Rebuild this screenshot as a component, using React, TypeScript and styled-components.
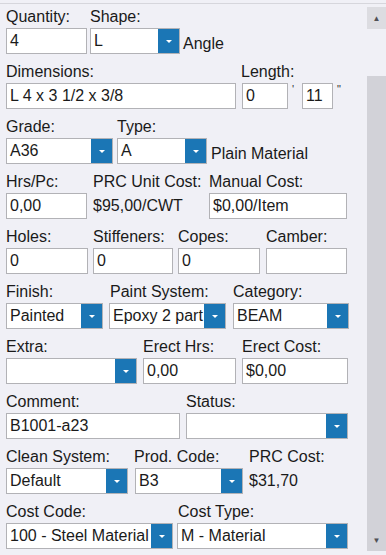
import React from "react";
import styled, { createGlobalStyle } from "styled-components";

const GlobalStyle = createGlobalStyle`
  html, body {
    margin: 0;
    padding: 0;
    background: #f0f0f6;
    overflow: hidden;
  }
  * {
    box-sizing: border-box;
  }
`;

const Window = styled.div`
  width: 386px;
  height: 555px;
  background: #f0f0f6;
  font-family: "Liberation Sans", Arial, sans-serif;
  font-size: 16px;
  color: #1a1a1a;
  display: flex;
  flex-direction: column;
  overflow: hidden;
`;

const TopLine = styled.div`
  height: 1px;
  margin-top: 3px;
  background: #d6d6dc;
  flex: none;
`;

const Body = styled.div`
  display: flex;
  flex: 1;
  padding-top: 3px;
`;

const Form = styled.div`
  flex: 1;
  display: flex;
  flex-direction: column;
  gap: 9px;
  padding: 1px 0 0 6px;
`;

const Row = styled.div<{ $gap?: number }>`
  display: flex;
  gap: ${(p) => p.$gap ?? 5}px;
`;

const Field = styled.div<{ $w?: number; $shift?: number }>`
  display: flex;
  flex-direction: column;
  width: ${(p) => (p.$w ? `${p.$w}px` : "auto")};
  flex: none;
  margin-left: ${(p) => p.$shift ?? 0}px;
`;

const Label = styled.div<{ $indent?: number }>`
  height: 20px;
  line-height: 18px;
  white-space: nowrap;
  margin-left: ${(p) => p.$indent ?? 0}px;
`;

const TextBox = styled.div`
  height: 26px;
  border: 1px solid #b2b2b6;
  background: #fff;
  padding-left: 3px;
  line-height: 24px;
  white-space: nowrap;
  overflow: hidden;
`;

const Combo = styled.div`
  height: 26px;
  border: 1px solid #b2b2b6;
  background: #fff;
  display: flex;
  overflow: hidden;
`;

const ComboText = styled.div`
  flex: 1;
  min-width: 0;
  padding-left: 3px;
  line-height: 24px;
  white-space: nowrap;
  overflow: visible;
`;

const DropButton = styled.div`
  width: 21px;
  flex: none;
  position: relative;
  z-index: 1;
  background: #1b76b5;
  display: flex;
  align-items: center;
  justify-content: center;
  &::after {
    content: "";
    border-left: 3px solid transparent;
    border-right: 3px solid transparent;
    border-top: 3px solid #ffffff;
    margin-top: 1px;
  }
`;

const Note = styled.div<{ $center?: boolean }>`
  height: 26px;
  display: flex;
  align-items: ${(p) => (p.$center ? "center" : "flex-end")};
  padding-bottom: ${(p) => (p.$center ? 0 : 1)}px;
  white-space: nowrap;
`;

const Mark = styled.div<{ $w: number }>`
  height: 26px;
  width: ${(p) => p.$w}px;
  font-size: 11px;
  line-height: 12px;
  padding-left: 4px;
  color: #333;
`;

const Scrollbar = styled.div`
  width: 19px;
  flex: none;
  display: flex;
  flex-direction: column;
  padding-bottom: 4px;
`;

const ScrollButton = styled.div`
  height: 22px;
  background: #dcdce1;
  display: flex;
  align-items: center;
  justify-content: center;
  font-size: 8px;
  color: #505055;
`;

const Thumb = styled.div`
  flex: 1;
  margin-top: 47px;
  background: #d2d2d8;
  display: flex;
  flex-direction: column;
  justify-content: flex-end;
  align-items: center;
  padding-bottom: 6px;
  font-size: 8px;
  color: #505055;
`;

const Select: React.FC<{ value: string }> = ({ value }) => (
  <Combo>
    <ComboText>{value}</ComboText>
    <DropButton />
  </Combo>
);

const App: React.FC = () => {
  return (
    <Window>
      <GlobalStyle />
      <TopLine />
      <Body>
        <Form>
          <Row $gap={3}>
            <Field $w={81}>
              <Label>Quantity:</Label>
              <TextBox>4</TextBox>
            </Field>
            <Field $w={90}>
              <Label>Shape:</Label>
              <Select value="L" />
            </Field>
            <Field>
              <Label />
              <Note>Angle</Note>
            </Field>
          </Row>

          <Row $gap={6}>
            <Field $w={230}>
              <Label>Dimensions:</Label>
              <TextBox>L 4 x 3 1/2 x 3/8</TextBox>
            </Field>
            <Row $gap={0}>
              <Field $w={46}>
                <Label $indent={-1}>Length:</Label>
                <TextBox>0</TextBox>
              </Field>
              <Field>
                <Label />
                <Mark $w={14}>'</Mark>
              </Field>
              <Field $w={31}>
                <Label />
                <TextBox>11</TextBox>
              </Field>
              <Field>
                <Label />
                <Mark $w={14}>"</Mark>
              </Field>
            </Row>
          </Row>

          <Row $gap={4}>
            <Field $w={107}>
              <Label>Grade:</Label>
              <Select value="A36" />
            </Field>
            <Field $w={90}>
              <Label>Type:</Label>
              <Select value="A" />
            </Field>
            <Field>
              <Label />
              <Note>Plain Material</Note>
            </Field>
          </Row>

          <Row $gap={6}>
            <Field $w={81}>
              <Label>Hrs/Pc:</Label>
              <TextBox>0,00</TextBox>
            </Field>
            <Field $w={110}>
              <Label>PRC Unit Cost:</Label>
              <Note $center>$95,00/CWT</Note>
            </Field>
            <Field $w={138}>
              <Label>Manual Cost:</Label>
              <TextBox>$0,00/Item</TextBox>
            </Field>
          </Row>

          <Row $gap={5}>
            <Field $w={82}>
              <Label>Holes:</Label>
              <TextBox>0</TextBox>
            </Field>
            <Field $w={80}>
              <Label>Stiffeners:</Label>
              <TextBox>0</TextBox>
            </Field>
            <Field $w={82}>
              <Label>Copes:</Label>
              <TextBox>0</TextBox>
            </Field>
            <Field $w={81} $shift={1}>
              <Label>Camber:</Label>
              <TextBox />
            </Field>
          </Row>

          <Row $gap={6}>
            <Field $w={97}>
              <Label>Finish:</Label>
              <Select value="Painted" />
            </Field>
            <Field $w={117}>
              <Label $indent={1}>Paint System:</Label>
              <Select value="Epoxy 2 part" />
            </Field>
            <Field $w={116} $shift={1}>
              <Label>Category:</Label>
              <Select value="BEAM" />
            </Field>
          </Row>

          <Row $gap={6}>
            <Field $w={131}>
              <Label>Extra:</Label>
              <Select value="" />
            </Field>
            <Field $w={93}>
              <Label>Erect Hrs:</Label>
              <TextBox>0,00</TextBox>
            </Field>
            <Field $w={106}>
              <Label>Erect Cost:</Label>
              <TextBox>$0,00</TextBox>
            </Field>
          </Row>

          <Row $gap={6}>
            <Field $w={174}>
              <Label>Comment:</Label>
              <TextBox>B1001-a23</TextBox>
            </Field>
            <Field $w={162}>
              <Label>Status:</Label>
              <Select value="" />
            </Field>
          </Row>

          <Row $gap={7}>
            <Field $w={122}>
              <Label>Clean System:</Label>
              <Select value="Default" />
            </Field>
            <Field $w={108}>
              <Label $indent={-1}>Prod. Code:</Label>
              <Select value="B3" />
            </Field>
            <Field $shift={-1}>
              <Label>PRC Cost:</Label>
              <Note $center>$31,70</Note>
            </Field>
          </Row>

          <Row $gap={4}>
            <Field $w={167}>
              <Label>Cost Code:</Label>
              <Select value="100 - Steel Material" />
            </Field>
            <Field $w={171}>
              <Label $indent={1}>Cost Type:</Label>
              <Select value="M - Material" />
            </Field>
          </Row>
        </Form>

        <Scrollbar>
          <ScrollButton>▲</ScrollButton>
          <Thumb>▼</Thumb>
        </Scrollbar>
      </Body>
    </Window>
  );
};

export default App;
